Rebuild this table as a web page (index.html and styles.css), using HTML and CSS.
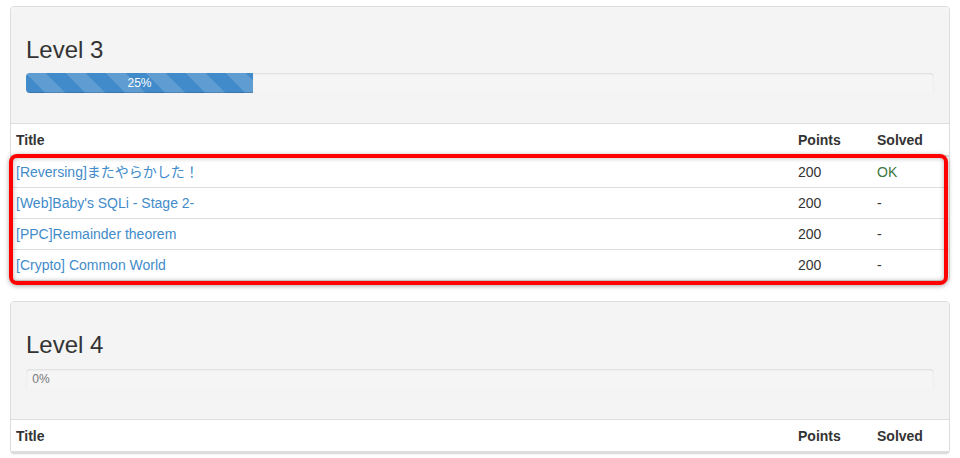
FILE: index.html
```html
<!DOCTYPE html>
<html lang="ja">
<head>
<meta charset="utf-8">
<link rel="stylesheet" href="styles.css">
</head>
<body>
<div class="wrap">
  <div class="panel">
    <div class="panel-heading">
      <h3 class="level">Level 3</h3>
      <div class="progress">
        <div class="progress-bar striped" style="width: 25%">25%</div>
      </div>
    </div>
    <table class="table">
      <thead>
        <tr><th class="c-title">Title</th><th class="c-points">Points</th><th class="c-solved">Solved</th></tr>
      </thead>
      <tbody>
        <tr><td><a href="#">[Reversing]またやらかした！</a></td><td>200</td><td class="ok">OK</td></tr>
        <tr><td><a href="#">[Web]Baby's SQLi - Stage 2-</a></td><td>200</td><td>-</td></tr>
        <tr><td><a href="#">[PPC]Remainder theorem</a></td><td>200</td><td>-</td></tr>
        <tr><td><a href="#">[Crypto] Common World</a></td><td>200</td><td>-</td></tr>
      </tbody>
    </table>
    <div class="highlight"></div>
  </div>
  <div class="panel">
    <div class="panel-heading">
      <h3 class="level">Level 4</h3>
      <div class="progress">
        <div class="progress-bar empty">0%</div>
      </div>
    </div>
    <table class="table">
      <thead>
        <tr><th class="c-title">Title</th><th class="c-points">Points</th><th class="c-solved">Solved</th></tr>
      </thead>
    </table>
  </div>
</div>
</body>
</html>
```
FILE: styles.css
```css
* { box-sizing: border-box; }
html, body { margin: 0; padding: 0; background: #fff; }
body {
  font-family: "Liberation Sans", Arial, "Noto Sans CJK JP", sans-serif;
  font-size: 14px;
  line-height: 20px;
  color: #333;
}
.wrap {
  padding: 6px 0 0 10px;
  width: 950px;
}
.panel {
  position: relative;
  background: #fff;
  border: 1px solid #ddd;
  border-radius: 4px;
  margin-bottom: 20px;
  box-shadow: 0 1px 1px rgba(0,0,0,.05);
}
.panel-heading {
  background: #f4f4f4;
  border-bottom: 1px solid #ddd;
  border-radius: 3px 3px 0 0;
  padding: 10px 15px;
}
.level {
  margin: 20px 0 10px;
  font-size: 24px;
  font-weight: normal;
  line-height: 26.4px;
  color: #333;
}
.progress {
  height: 20px;
  margin-bottom: 20px;
  background: #f5f5f5;
  border-radius: 4px;
  overflow: hidden;
  box-shadow: inset 0 1px 2px rgba(0,0,0,.1);
  display: flex;
}
.progress-bar {
  height: 20px;
  font-size: 12px;
  line-height: 20px;
  color: #fff;
  text-align: center;
  background-color: #428bca;
  box-shadow: inset 0 -1px 0 rgba(0,0,0,.15);
}
.progress-bar.striped {
  background-image: linear-gradient(45deg, rgba(255,255,255,.15) 25%, transparent 25%, transparent 50%, rgba(255,255,255,.15) 50%, rgba(255,255,255,.15) 75%, transparent 75%, transparent);
  background-size: 40px 40px;
}
.progress-bar.empty {
  min-width: 30px;
  color: #777;
  background: transparent;
  box-shadow: none;
}
.table {
  width: 100%;
  border-collapse: collapse;
  border-spacing: 0;
}
.table th, .table td {
  padding: 5px;
  text-align: left;
  vertical-align: top;
  line-height: 20px;
}
.table th {
  font-weight: bold;
  padding-top: 6px;
  border-bottom: 2px solid #ddd;
}
.table tbody td { border-top: 1px solid #ddd; }
.table tbody tr:first-child td { border-top: 0; }
.c-points { width: 79px; }
.c-solved { width: 77px; }
a { color: #428bca; text-decoration: none; }
.ok { color: #3c763d; }
.highlight {
  position: absolute;
  left: -2px;
  top: 147px;
  width: 939px;
  height: 131px;
  border: 4px solid #f00;
  border-radius: 8px;
  box-shadow: 0 1px 5px rgba(0,0,0,.35), inset 0 0 5px rgba(0,0,0,.3);
  pointer-events: none;
}
```
